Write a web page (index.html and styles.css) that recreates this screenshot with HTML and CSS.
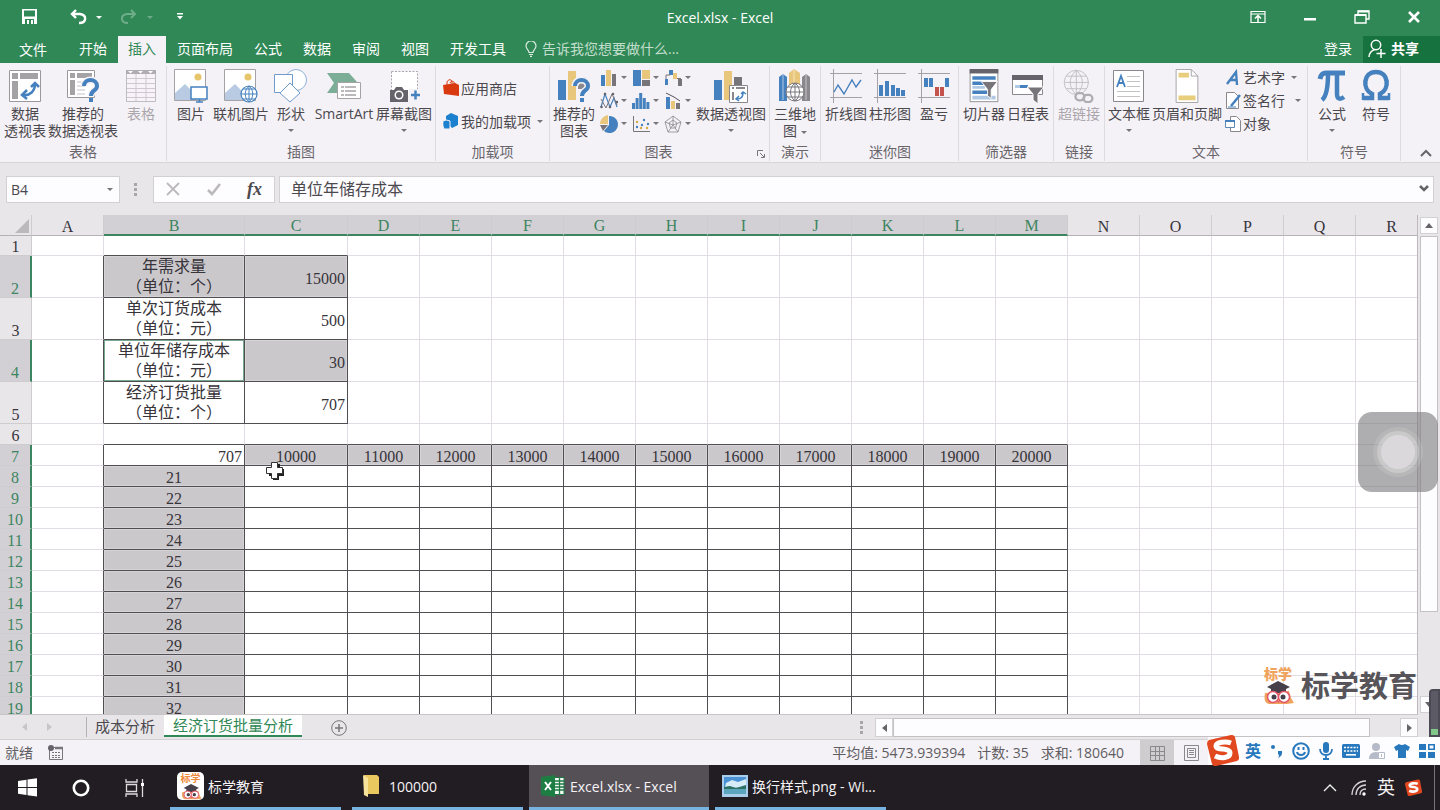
FILE: index.html
```html
<!DOCTYPE html>
<html lang="zh-CN">
<head>
<meta charset="utf-8">
<title>Excel.xlsx - Excel</title>
<link rel="stylesheet" href="styles.css">
</head>
<body>
<svg class="defs" width="0" height="0" aria-hidden="true">
  <defs>
    <symbol id="sogou" viewBox="0 0 32 32">
      <path fill="#e2481f" d="M2 6 24 1q3-.5 4 2l4 20q.5 3-2 4L9 32q-3 .5-4-2L0 10q0-3 2-4z"/>
      <path fill="none" stroke="#fff" stroke-width="5" d="M24 9c-5-2-15-1-15 3 0 5 14 1 14 7 0 5-9 6-15 3"/>
    </symbol>
    <symbol id="mascot" viewBox="0 0 32 24">
      <path fill="#f0a35c" d="M3 12q-2 10 4 11h18l7-1-3-5-2-7z"/>
      <path fill="#45404a" d="M5 6 16 0l12 6-4 2v4H9V8z"/>
      <circle cx="11" cy="16" r="5.500" fill="#fff" stroke="#e2586a" stroke-width="1.500"/>
      <circle cx="22" cy="16" r="5.500" fill="#fff" stroke="#e2586a" stroke-width="1.500"/>
      <circle cx="12" cy="16" r="2.500" fill="#45404a"/><circle cx="21" cy="16" r="2.500" fill="#45404a"/>
      <path fill="#e2586a" d="m15 20 1.500 2 1.500-2z"/>
    </symbol>
  </defs>
</svg>
<div class="app">
  <header class="titlebar">
    <div class="quick">
      <button class="qbtn save" aria-label="保存"><svg width="16" height="16" viewBox="0 0 16 16"><path fill="#fff" fill-rule="evenodd" d="M0 0h15v15H0zM2 1.500v6h11v-6zM3 10v5h9v-5z"/><path fill="#fff" d="M5 11h2v4H5zM9 11h2v4H9z"/></svg></button>
      <button class="qbtn undo" aria-label="撤消"><svg width="17" height="16" viewBox="0 0 17 16"><path fill="none" stroke="#fff" stroke-width="2.400" d="M2 5h8c7 1 7 9-1 9M6 1 2 5l4 4"/></svg></button><i class="caret white"></i>
      <button class="qbtn redo" aria-label="恢复"><svg width="17" height="16" viewBox="0 0 17 16"><path fill="none" stroke="#fff" stroke-width="2" d="M15 5H7c-7 1-7 9 1 9M11 1l4 4-4 4"/></svg></button><i class="caret white dim"></i>
      <button class="qbtn more" aria-label="自定义快速访问工具栏"><svg width="8" height="8" viewBox="0 0 8 8"><path fill="#fff" d="M1 0h6v1.500H1zM1 3h6L4 6.500z"/></svg></button>
    </div>
    <h1 class="title">Excel.xlsx - Excel</h1>
    <div class="wincontrols">
      <button aria-label="功能区显示选项"><svg width="16" height="14" viewBox="0 0 16 14"><path fill="none" stroke="#fff" stroke-width="1.200" d="M1 1.500h14v11H1zM1 4h14"/><path fill="none" stroke="#fff" stroke-width="1.500" d="M8 12V6M5 8.500l3-3 3 3"/></svg></button>
      <button aria-label="最小化"><svg width="14" height="14" viewBox="0 0 14 14"><path fill="#fff" d="M1 8h12v2.500H1z"/></svg></button>
      <button aria-label="还原"><svg width="16" height="14" viewBox="0 0 16 14"><path fill="none" stroke="#fff" stroke-width="1.400" d="M4 4V1h11v8h-3M1 5h11v8H1z"/><path stroke="#fff" stroke-width="2" d="M1 5h11M4 1.500h11"/></svg></button>
      <button aria-label="关闭"><svg width="12" height="12" viewBox="0 0 12 12"><path stroke="#fff" stroke-width="2.600" d="m1 1 10 10M11 1 1 11"/></svg></button>
    </div>
  </header>

  <nav class="tabs">
    <button class="tab file">文件</button>
    <button class="tab">开始</button>
    <button class="tab current">插入</button>
    <button class="tab">页面布局</button>
    <button class="tab">公式</button>
    <button class="tab">数据</button>
    <button class="tab">审阅</button>
    <button class="tab">视图</button>
    <button class="tab">开发工具</button>
    <button class="tell"><svg width="12" height="16" viewBox="0 0 12 16"><path fill="none" stroke="#d8ecdf" stroke-width="1.200" d="M4 11.500C4 9 1 8 1 5a5 5 0 0 1 10 0c0 3-3 4-3 6.500zM4 13.500h4M5 15.400h2"/></svg>告诉我您想要做什么...</button>
    <span class="grow"></span>
    <button class="login">登录</button>
    <button class="share"><svg width="18" height="20" viewBox="0 0 18 20"><circle cx="8" cy="6" r="4.700" fill="none" stroke="#fff" stroke-width="1.500"/><path fill="none" stroke="#fff" stroke-width="1.500" d="M1 18c0-4 3-7 6-7.500M13 10v9M8.500 14.500h9"/></svg>共享</button>
  </nav>

  <section class="ribbon">
    <div class="group">
      <div class="tools">
        <button class="big w48"><svg width="32" height="32" viewBox="0 0 32 32"><path fill="#fff" stroke="#9b989c" d="M.5.500h31v31H.5z"/><path fill="#a5a2a6" d="M3 3h6v6H3zM11 3h18v6H11zM3 11h6v18H3z"/><path fill="none" stroke="#4581be" stroke-width="2.500" d="M14 25c7 1 12-4 12-11M18 20l-5 5 5 4M22 17l4-4 4 4"/></svg><span>数据<br>透视表</span></button>
        <button class="big w68"><svg width="32" height="34" viewBox="0 0 32 34"><path fill="#fff" stroke="#9b989c" d="M.5 1.500h27v27H.5z"/><path fill="#a5a2a6" d="M3 4h5v5H3zM10 4h15v5H10zM3 11h5v15H3z"/><path stroke="#c4c1c5" d="M10 13h8M10 17h8M10 21h8M10 25h8"/><path fill="none" stroke="#f5f2f7" stroke-width="7" d="M17 17c0-8 13-8 13 0 0 5-6 4-6 10"/><path fill="none" stroke="#4581be" stroke-width="4" d="M17 17c0-8 13-8 13 0 0 5-6 4-6 10"/><path fill="#4581be" d="M22 29h4v4h-4z"/></svg><span>推荐的<br>数据透视表</span></button>
        <button class="big w48 off"><svg width="32" height="32" viewBox="0 0 32 32"><path fill="#f7f3f8" stroke="#c0bbc1" d="M1.500.500h29v31h-29z"/><path fill="#b0acb1" d="M1 0h30v4H1z"/><path fill="#fff" d="M3 1h5L5.500 3.500zM13 1h5l-2.500 2.500zM23 1h5l-2.500 2.500z"/><path stroke="#cfc8d0" d="M11 4v27M21 4v27M2 8.500h28M2 13.500h28M2 18.500h28M2 22.500h28M2 27.500h28"/></svg><span>表格</span></button>
      </div>
      <p class="glabel">表格</p>
    </div>
    <div class="group">
      <div class="tools">
        <button class="big w46"><svg width="34" height="34" viewBox="0 0 34 34"><path fill="#fff" stroke="#a5a2a6" d="M.5.500h31v31H.5z"/><path fill="#b9cbe3" d="M1 24 11 15l12 12v4H1z"/><circle cx="24" cy="8" r="3.500" fill="#e7c56d"/><path fill="#fff" stroke="#4581be" stroke-width="1.500" d="M17 18h16v12H17z"/><path stroke="#4581be" stroke-width="1.500" d="M22 33h7M25.500 30v3"/></svg><span>图片</span></button>
        <button class="big w54"><svg width="34" height="34" viewBox="0 0 34 34"><path fill="#fff" stroke="#a5a2a6" d="M.5.500h31v31H.5z"/><path fill="#b9cbe3" d="M1 24 11 15l12 12v4H1z"/><circle cx="24" cy="8" r="3.500" fill="#e7c56d"/><circle cx="25" cy="25" r="8" fill="#fff" stroke="#4581be" stroke-width="1.200"/><path fill="none" stroke="#4581be" d="M25 17c-5 4-5 12 0 16 5-4 5-12 0-16zM17 25h16M25 17v16M19 20h12M19 30h12"/></svg><span>联机图片</span></button>
        <button class="big w46"><svg width="34" height="34" viewBox="0 0 34 34"><circle cx="22" cy="11" r="10.500" fill="#fff" stroke="#8fb0d6"/><path fill="#fff" stroke="#6f9bcb" d="M.5 5.500h18v18H.5z"/><path fill="#fff" stroke="#6f9bcb" d="m16 14 10 10-10 9L6 24z"/></svg><span>形状</span><i class="caret"></i></button>
        <button class="big w60"><svg width="34" height="32" viewBox="0 0 34 32"><path fill="#7cae97" d="M0 3h22l8 9H18l-7 11H0l7-10z"/><path fill="#fff" stroke="#a5a2a6" d="M10.500 12.500h23v16h-23z"/><path stroke="#a5a2a6" stroke-width="1.500" d="M14 17h3M18 17h11M14 21h3M18 21h11M14 25h3M18 25h11"/></svg><span>SmartArt</span></button>
        <button class="big w60"><svg width="32" height="34" viewBox="0 0 32 34"><path fill="#fff" stroke="#aaa7ab" stroke-dasharray="2 1.500" d="M3.500 2.500h26v24h-26z"/><path fill="#66646a" d="M2 21h4l2-3h6l2 3h4v12H2z"/><circle cx="11" cy="26" r="4.500" fill="#fff"/><circle cx="11" cy="26" r="3" fill="#66646a"/><path fill="#f5f2f7" d="M21 20h11v14H21z"/><path stroke="#4581be" stroke-width="2.500" d="M23 26h9M27.500 21.500v9"/></svg><span>屏幕截图</span><i class="caret"></i></button>
      </div>
      <p class="glabel">插图</p>
    </div>
    <div class="group addins">
      <div class="tools stack2">
        <button class="row"><svg width="16" height="18" viewBox="0 0 16 18"><path fill="#d9390f" d="m0 6 12-2 4 2v11L1 15z"/><path fill="none" stroke="#d9390f" d="M4 8V3c1-3 5-3 5 0v3M7 4c1-3 4-2 5 1"/></svg>应用商店</button>
        <button class="row"><svg width="16" height="18" viewBox="0 0 16 18"><path fill="#1b80cd" d="m8 1 7 3v9l-6 3-6-6V4z"/><path fill="#1b80cd" stroke="#f5f2f7" d="M0 9q3-2 7 0v8H1q-2-4-1-8z"/></svg>我的加载项<i class="caret gap4"></i></button>
      </div>
      <p class="glabel">加载项</p>
    </div>
    <div class="group charts">
      <div class="tools">
        <button class="big w46"><svg width="34" height="34" viewBox="0 0 34 34"><path fill="#4581be" d="M1 11h8v20H1z"/><path fill="#e8c77d" d="M11 2h8v29h-8z"/><path fill="#8a888c" d="M21 8h8v23h-8z"/><path fill="none" stroke="#f5f2f7" stroke-width="7" d="M18 17c0-8 13-8 13 0 0 5-6 4-6 10"/><path fill="#f5f2f7" d="M19 20h12v14H19z"/><path fill="none" stroke="#4581be" stroke-width="4" d="M18 17c0-8 13-8 13 0 0 5-6 4-6 10"/><path fill="#4581be" d="M23 29h4v4h-4z"/></svg><span>推荐的<br>图表</span></button>
        <div class="minis">
          <button aria-label="柱形图"><svg width="18" height="18" viewBox="0 0 18 18"><path fill="#4581be" d="M1 6h4v11H1z"/><path fill="#e8c77d" d="M6 1h5v16H6z"/><path fill="#77757a" d="M12 5h4v12h-4z"/></svg><i class="caret"></i></button>
          <button aria-label="层次结构图"><svg width="18" height="18" viewBox="0 0 18 18"><path fill="#4581be" d="M1 1h8v16H1z"/><path fill="#e8c77d" d="M10 1h8v9h-8z"/><path fill="#77757a" d="M10 11h8v6h-8z"/></svg><i class="caret"></i></button>
          <button aria-label="瀑布图"><svg width="18" height="18" viewBox="0 0 18 18"><path fill="#4581be" d="M1 10h3v6H1zM5 1h4v5H5z"/><path fill="#e8c77d" d="M9 4h4v6H9z"/><path fill="none" stroke="#77757a" d="M2 10V6h4M13 9.500h4"/><path fill="#77757a" d="M14 10h4v7h-4z"/></svg><i class="caret"></i></button>
          <button aria-label="折线图"><svg width="18" height="18" viewBox="0 0 18 18"><path fill="none" stroke="#4581be" stroke-width="1.200" d="m1 15 4-13 5 13 4-9 3 9"/><path fill="none" stroke="#77757a" d="m1 7 5 9 6-14 5 11"/><g fill="#66646a"><circle cx="5" cy="2" r="1.300"/><circle cx="13" cy="2" r="1.300"/><circle cx="1.500" cy="15" r="1.300"/><circle cx="10" cy="15" r="1.300"/><circle cx="17" cy="10" r="1.300"/></g></svg><i class="caret"></i></button>
          <button aria-label="统计图"><svg width="18" height="18" viewBox="0 0 18 18"><path fill="#4581be" d="M0 11h3v6H0zM3.600 6h3v11h-3zM7.200 1h3v16h-3zM10.800 6h3v11h-3zM14.400 10h3v7h-3z"/></svg><i class="caret"></i></button>
          <button aria-label="组合图"><svg width="18" height="18" viewBox="0 0 18 18"><path fill="#4581be" d="M2 5h4v12H2z"/><path fill="#e8c77d" d="M7 9h4v8H7z"/><path fill="#77757a" d="M12 11h4v6h-4z"/><path fill="none" stroke="#55535a" d="m2 1 8 4 6 4"/></svg><i class="caret"></i></button>
          <button aria-label="饼图"><svg width="18" height="18" viewBox="0 0 18 18"><path fill="#e8c77d" d="M8 9V0a9 9 0 0 0-8 9z"/><path fill="#4581be" d="M9 1a8.500 8.500 0 1 1-5 15l5-6z"/><path fill="#77757a" d="M0 10h8l-5 6z"/></svg><i class="caret"></i></button>
          <button aria-label="散点图"><svg width="18" height="18" viewBox="0 0 18 18"><path fill="none" stroke="#77757a" d="M1.500 1v15.500H18"/><g fill="#4581be"><circle cx="12" cy="5" r="1.200"/><circle cx="5" cy="12" r="1.200"/><circle cx="16" cy="9" r="1.200"/><circle cx="10" cy="10" r="1.200"/></g><g fill="#d8ac45"><circle cx="5" cy="7" r="1.200"/><circle cx="9" cy="13" r="1.200"/><circle cx="15" cy="13" r="1.200"/></g></svg><i class="caret"></i></button>
          <button aria-label="雷达图"><svg width="18" height="18" viewBox="0 0 18 18"><path fill="none" stroke="#8a888c" stroke-width=".8" d="m9 1 8 6-3 10H4L1 7zM9 5l4 3-1.500 5h-5L5 8zM9 1v9M17 7 9 10 1 7M4 17l5-7 5 7"/></svg><i class="caret"></i></button>
        </div>
        <button class="big w70"><svg width="36" height="34" viewBox="0 0 36 34"><path fill="#4581be" d="M1 11h8v20H1z"/><path fill="#e8c77d" d="M11 2h8v29h-8z"/><path fill="#77757a" d="M21 8h8v12h-8z"/><path fill="#fff" stroke="#8a888c" d="M16.500 16.500h18v17h-18z"/><path stroke="#8a888c" stroke-width="2" d="M19 19h2M23 19h9M20 23v8"/><path fill="none" stroke="#4581be" stroke-width="1.500" d="M24 30c4 0 6-2 6-6M26 27l-3 3 3 2M28 25l2-2 3 2"/></svg><span>数据透视图</span><i class="caret"></i></button>
      </div>
      <p class="glabel">图表</p>
      <button class="launcher" aria-label="图表选项"><svg width="8" height="8" viewBox="0 0 8 8"><path fill="none" stroke="#77757a" d="M.5 6V.500H6M3 3l4 4M7.500 4v3.500H4"/></svg></button>
    </div>
    <div class="group">
      <div class="tools">
        <button class="big w48"><svg width="34" height="34" viewBox="0 0 34 34"><path fill="#4581be" d="m1 8 4-3 4 3v24H1z"/><path fill="#e8c77d" d="m11 4 5-4 6 4v24H11z"/><path fill="#8a888c" d="m24 8 4-3 4 3v24h-8z"/><path stroke="#b0cae6" d="M5 5v26"/><path stroke="#f6e6bd" d="M16 1v20"/><path stroke="#c8c6ca" d="M28 5v26"/><circle cx="17" cy="23" r="9" fill="#fff" stroke="#77757a"/><path fill="none" stroke="#77757a" d="M17 14c-6 5-6 13 0 18 6-5 6-13 0-18zM8 23h18M17 14v18M10 18h14M10 28h14"/></svg><span>三维地<br>图<i class="caret inline"></i></span></button>
      </div>
      <p class="glabel">演示</p>
    </div>
    <div class="group sparks">
      <div class="tools">
        <button class="big w44"><svg width="34" height="34" viewBox="0 0 34 34"><path stroke="#a5a2a6" d="M4.500 0v34M1 4.500h32M1 28.500h32"/><path fill="none" stroke="#4581be" stroke-width="1.400" d="m5 23 4-7 6 9 8-14 4 7 5-7"/></svg><span>折线图</span></button>
        <button class="big w44"><svg width="34" height="34" viewBox="0 0 34 34"><path stroke="#a5a2a6" d="M4.500 0v34M1 4.500h32M1 28.500h32"/><path fill="#4581be" d="M6 16h4v11H6zM12 12h4v15h-4zM18 16h4v11h-4zM23 19h4v8h-4zM28 21h4v6h-4z"/></svg><span>柱形图</span></button>
        <button class="big w44"><svg width="34" height="34" viewBox="0 0 34 34"><path stroke="#a5a2a6" d="M4.500 0v34M1 4.500h32M1 28.500h32"/><path fill="#4581be" d="M7 9h4v9H7zM12 9h4v9h-4zM28 9h4v9h-4z"/><path fill="#c4524d" d="M18 18h4v9h-4zM23 18h4v9h-4z"/></svg><span>盈亏</span></button>
      </div>
      <p class="glabel">迷你图</p>
    </div>
    <div class="group filters">
      <div class="tools">
        <button class="big w44"><svg width="34" height="36" viewBox="0 0 34 38"><path fill="#fff" stroke="#8a888c" d="M1.500.500h31v36h-31z"/><path fill="#66646a" d="M1 0h32v5H1z"/><path fill="#4581be" d="M4 8h26v4H4zM4 14h18v4H4zM4 24h20v4H4z"/><path fill="#b0cae6" d="M4 19h14v3H4zM4 30h26v4H4z"/><path fill="#77757a" stroke="#fff" d="M14 14h18l-7 9v10l-4-3v-7z"/></svg><span>切片器</span></button>
        <button class="big w44"><svg width="34" height="34" viewBox="0 0 34 34"><path fill="#fff" stroke="#8a888c" d="M1.500 7.500h30v18h-30z"/><path fill="#66646a" d="M1 6h31v5H1z"/><path fill="#b0cae6" d="M4 16h7v3H4z"/><path fill="#4581be" d="M9 16h8v3H9z"/><path fill="#77757a" stroke="#fff" d="M16 18h17l-6 7v10l-5-4v-6z"/></svg><span>日程表</span></button>
      </div>
      <p class="glabel">筛选器</p>
    </div>
    <div class="group">
      <div class="tools">
        <button class="big w48 off"><svg width="34" height="38" viewBox="0 0 34 38"><circle cx="14" cy="15" r="13.500" fill="none" stroke="#bebac0"/><path fill="none" stroke="#bebac0" d="M14 1.500c-9 8-9 19 0 27 9-8 9-19 0-27zM1 15h27M14 2v26M3 8h22M3 22h22"/><path fill="none" stroke="#f5f2f7" stroke-width="6" d="M13 31h19"/><rect x="13" y="27" width="10" height="8" rx="4" fill="none" stroke="#b0acb1" stroke-width="2.500"/><rect x="22" y="29" width="10" height="8" rx="4" fill="none" stroke="#b0acb1" stroke-width="2.500"/></svg><span>超链接</span></button>
      </div>
      <p class="glabel">链接</p>
    </div>
    <div class="group textgroup">
      <div class="tools">
        <button class="big w46"><svg width="34" height="34" viewBox="0 0 34 34"><path fill="#fff" stroke="#8a888c" d="M1.500 1.500h30v31h-30z"/><path stroke="#c4c1c5" d="M15 7.500h13M15 12.500h13M15 17.500h13M5 22.500h23M5 27.500h23"/><path fill="none" stroke="#4581be" stroke-width="1.800" d="m5 18 4-11 4 11M6.500 14h5"/></svg><span>文本框</span><i class="caret"></i></button>
        <button class="big w70"><svg width="26" height="36" viewBox="0 0 26 36"><path fill="#fff" stroke="#a5a2a6" d="M1.500.500h16l7 7v28h-23z"/><path fill="none" stroke="#a5a2a6" d="M17.500.500v7h7"/><path fill="#e8cd7d" d="M4 4h11v5H4zM4 28h18v5H4z"/></svg><span>页眉和页脚</span></button>
        <div class="stack3">
          <button class="row"><svg width="16" height="18" viewBox="0 0 16 18"><path fill="none" stroke="#4581be" stroke-width="2.400" d="M2 15 11 3l1 13M5 11h7"/></svg>艺术字<i class="caret gap4"></i></button>
          <button class="row"><svg width="16" height="18" viewBox="0 0 16 18"><path fill="#fff" stroke="#8a888c" d="M1.500.500h8l4 4v12h-12z"/><path stroke="#4581be" stroke-width="2.500" d="m15 3-9 11"/><path stroke="#4581be" d="M3 15h8"/></svg>签名行<i class="caret gap8"></i></button>
          <button class="row"><svg width="16" height="18" viewBox="0 0 16 18"><path fill="#fff" stroke="#8a888c" d="M5.500 1.500h6l4 4v11h-10z"/><path fill="#fff" stroke="#6289b4" d="M.5 5.500h9v7h-9z"/><path stroke="#4581be" stroke-width="2" d="M0 6h10"/></svg>对象</button>
        </div>
      </div>
      <p class="glabel">文本</p>
    </div>
    <div class="group symbols">
      <div class="tools">
        <button class="big w44"><svg width="30" height="34" viewBox="0 0 30 34"><path fill="none" stroke="#4581be" stroke-width="5" d="M3 10c1-5 3-6 6-6h19"/><path fill="none" stroke="#4581be" stroke-width="4.500" d="M11 5c0 12-1 22-6 26M20 5v20c0 5 3 6 7 3"/></svg><span>公式</span><i class="caret"></i></button>
        <button class="big w44"><svg width="30" height="34" viewBox="0 0 30 34"><path fill="none" stroke="#4581be" stroke-width="4.500" d="M2 29h9v-4C1 20 2 3 15 3s14 17 4 22v4h9"/><path stroke="#4581be" stroke-width="2.500" d="M2 24v7M28 24v7"/></svg><span>符号</span></button>
      </div>
      <p class="glabel">符号</p>
    </div>
    <button class="collapse" aria-label="折叠功能区"><svg width="12" height="8" viewBox="0 0 12 8"><path fill="none" stroke="#66646a" stroke-width="2" d="m1 7 5-5 5 5"/></svg></button>
  </section>

  <section class="formulabar">
    <div class="namebox"><input type="text" value="B4" aria-label="名称框"><button aria-label="名称列表"><i class="caret"></i></button></div>
    <span class="dots"></span>
    <div class="fxbox">
      <button aria-label="取消"><svg width="14" height="14" viewBox="0 0 14 14"><path stroke="#bcb9bd" stroke-width="1.800" d="m1 1 12 12M13 1 1 13"/></svg></button>
      <button aria-label="输入"><svg width="14" height="14" viewBox="0 0 14 14"><path fill="none" stroke="#bcb9bd" stroke-width="2.600" d="m1 8 4 4 8-10"/></svg></button>
      <button class="fx" aria-label="插入函数">fx</button>
    </div>
    <div class="formula"><input type="text" value="单位年储存成本" aria-label="编辑栏"><button aria-label="展开编辑栏"><svg width="10" height="8" viewBox="0 0 10 8"><path fill="none" stroke="#66646a" stroke-width="2.600" d="m1 1 4 4 4-4"/></svg></button></div>
  </section>

  <main class="sheetarea">
    <div class="gridwrap">
      <table class="grid" id="grid"></table>
      <svg class="pointer" width="18" height="18" viewBox="0 0 18 18"><path fill="#222" d="M7 2h7v5h4v7h-5v4H7v-4H3V7h4z"/><path fill="#fff" stroke="#333" d="M5.500.500h6v5h5v6h-5v5h-6v-5h-5v-6h5z"/></svg>
      <div class="brand">
        <div class="brandlogo"><b>标学</b><svg width="32" height="24"><use href="#mascot"/></svg></div>
        <span>标学教育</span>
      </div>
    </div>
    <div class="vscroll">
      <button aria-label="向上滚动"><i class="tri up"></i></button>
      <div class="vtrack"><div class="vthumb"></div></div>
      <button aria-label="向下滚动"><i class="tri down"></i></button>
    </div>
    <div class="meter"></div>
    <button class="assist" aria-label="辅助触控"><i></i></button>
  </main>

  <div class="sheettabs">
    <div class="sheetnav"><i class="tri left faint"></i><i class="tri right faint"></i></div>
    <button class="stab">成本分析</button>
    <button class="stab active">经济订货批量分析</button>
    <button class="addsheet" aria-label="新工作表"><svg width="16" height="16" viewBox="0 0 16 16"><circle cx="8" cy="8" r="7.300" fill="none" stroke="#77757a"/><path stroke="#77757a" stroke-width="1.500" d="M8 4v8M4 8h8"/></svg></button>
    <span class="grow"></span>
    <span class="dots"></span>
    <div class="hscroll">
      <button aria-label="向左滚动"><i class="tri left"></i></button>
      <div class="htrack"><div class="hthumb"></div></div>
      <button aria-label="向右滚动"><i class="tri right"></i></button>
    </div>
  </div>

  <footer class="status">
    <span>就绪</span>
    <svg class="macro" width="16" height="15" viewBox="0 0 16 15"><path fill="none" stroke="#77757a" d="M1.500 5v9.500h13V2.500H6"/><path stroke="#77757a" stroke-width="2.500" d="M7 3h8"/><path stroke="#77757a" stroke-dasharray="2 1" d="M4 7.500h9M4 10.500h9M4 12.500h9"/><circle cx="3" cy="3" r="3" fill="#66646a"/></svg>
    <span class="grow"></span>
    <span class="stat">平均值: 5473.939394</span>
    <span class="stat">计数: 35</span>
    <span class="stat">求和: 180640</span>
    <button class="view on" aria-label="普通"><svg width="16" height="16" viewBox="0 0 16 16"><path fill="none" stroke="#8a888c" d="M1.500 1.500h14v14h-14zM6.500 1v14M10.500 1v14M1 6.500h14M1 10.500h14"/></svg></button>
    <button class="view" aria-label="页面布局"><svg width="16" height="16" viewBox="0 0 16 16"><path fill="none" stroke="#8a888c" d="M1.500.500h14v15h-14zM4.500 3.500h8v9h-8zM6 5.500h5M6 7.500h5M6 9.500h5"/></svg></button>
    <div class="ime">
      <svg class="imelogo" width="32" height="32"><use href="#sogou"/></svg>
      <b>英</b>
      <svg width="14" height="16" viewBox="0 0 14 16"><circle cx="3" cy="4" r="2" fill="#2878bd"/><path fill="#2878bd" d="M8 8h4q1 5-4 7 2-3 0-4z"/></svg>
      <svg width="18" height="18" viewBox="0 0 18 18"><circle cx="9" cy="9" r="7.800" fill="none" stroke="#2878bd" stroke-width="2"/><path fill="none" stroke="#2878bd" stroke-width="2" d="M6.500 5v3M11.500 5v3M5 10c1 4 7 4 8 0"/></svg>
      <svg width="14" height="18" viewBox="0 0 14 18"><rect x="4" y="0" width="6" height="11" rx="3" fill="#2878bd"/><path fill="none" stroke="#2878bd" stroke-width="1.800" d="M1 7c0 8 12 8 12 0M7 13v4M4 17h6"/></svg>
      <svg width="18" height="16" viewBox="0 0 18 16"><rect y="1" width="18" height="14" rx="1.500" fill="#2878bd"/><path stroke="#fff" stroke-width="1.600" stroke-dasharray="2 1.200" d="M2 4.500h14M2 8h14"/><path stroke="#fff" stroke-width="1.600" d="M4 11.800h10"/></svg>
      <svg width="17" height="17" viewBox="0 0 17 17"><circle cx="7" cy="4" r="4" fill="#b5bbc8"/><path fill="#b5bbc8" d="M0 16q0-7 7-7t7 7z"/><path fill="#fff" stroke="#b5bbc8" d="M9.500 9.500h6v6h-6z"/><path stroke="#b5bbc8" d="M12.500 11v3"/></svg>
      <svg width="16" height="16" viewBox="0 0 16 16"><path fill="#2878bd" d="M5 1q3 2 6 0l5 3-2 4-2-1v8H4V7L2 8 0 4z"/></svg>
      <svg width="16" height="16" viewBox="0 0 16 16"><path fill="#2878bd" d="M0 1h7v6H0zM0 9h7v6H0zM9 9h7v6H9z"/><path fill="none" stroke="#2878bd" stroke-width="1.600" d="M9.800 1.800h5.400v4.400H9.800z"/></svg>
    </div>
  </footer>

  <div class="taskbar">
    <button class="start" aria-label="开始"><svg width="20" height="19" viewBox="0 0 20 19"><path fill="#fff" d="m0 3 8.500-1.200v7.200H0zM9.500 1.600 19 .2V9H9.500zM0 10h8.500v7L0 15.800zM9.500 10H19v8.600l-9.500-1.400z"/></svg></button>
    <button class="cortana" aria-label="搜索"><svg width="18" height="18" viewBox="0 0 18 18"><circle cx="9" cy="9" r="7.200" fill="none" stroke="#fff" stroke-width="2.600"/></svg></button>
    <button class="taskview" aria-label="任务视图"><svg width="20" height="18" viewBox="0 0 20 18"><path fill="none" stroke="#dcdadd" stroke-width="1.300" d="M1 0v3h11V0M1 18v-3h11v3M1.500 5.500h10v7h-10zM17.500 0v18"/><path fill="#fff" d="M16 4h3v3h-3z"/></svg></button>
    <button class="task"><span class="appicon"><b>标学</b><svg width="22" height="16" viewBox="0 0 32 24"><use href="#mascot"/></svg></span>标学教育</button>
    <button class="task folder"><svg width="16" height="22" viewBox="0 0 16 22"><path fill="#e9c85f" d="M1 0h13l2 2v17H4z"/><path fill="#f8e39b" d="m0 0 5 3v19l-4-2z"/></svg>100000</button>
    <button class="task now"><svg width="24" height="22" viewBox="0 0 24 22"><path fill="#f3f8f4" stroke="#1f7a44" d="M12 2.500h11v17H12z"/><path stroke="#1f7a44" stroke-width="1.300" d="M14 6h9M14 9h9M14 12h9M14 15h9M18.500 3v16"/><path fill="#1c7e42" d="m0 2 14-2v22L0 20z"/><path stroke="#fff" stroke-width="2" d="m4 7 6 8M10 7l-6 8"/></svg>Excel.xlsx - Excel</button>
    <button class="task"><svg width="26" height="22" viewBox="0 0 26 22"><path fill="#a9cdea" d="M0 0h26v22H0z"/><path fill="#4b92d4" d="M2 2h22v10H2z"/><path fill="#d5ebf8" d="m4 8 6-3 6 2 8-3v8H3z"/><path fill="#2c6f63" d="m2 12 6-1 6 2 10-3v4H2z"/><path fill="#5ba5bd" d="M2 14h22v5H2z"/></svg>换行样式.png - Wi...</button>
    <span class="grow"></span>
    <div class="tray">
      <svg width="14" height="8" viewBox="0 0 14 8"><path fill="none" stroke="#eee" stroke-width="1.400" d="m1 7 6-6 6 6"/></svg>
      <svg width="16" height="16" viewBox="0 0 16 16"><path fill="none" stroke="#d5d3d6" stroke-width="1.300" d="M1 15C1 7 7 1 15 1M5 15C5 9 9 5 15 5M9 15q0-6 6-6"/><circle cx="13" cy="14" r="1.700" fill="#fff"/></svg>
      <span>英</span>
      <svg width="17" height="17"><use href="#sogou"/></svg>
    </div>
  </div>
</div>
<script src="grid.js"></script>
</body>
</html>
```
FILE: styles.css
```css
* { box-sizing: border-box; }
body { margin: 0; font: 14px/17px "Open Sans", "Noto Sans CJK SC", sans-serif; color: #4c494e; }
button, input { font: inherit; color: inherit; border: 0; background: none; padding: 0; margin: 0; }
button { white-space: nowrap; }
svg { display: block; flex: none; }
p, h1 { margin: 0; }
.defs { position: absolute; }
.app { height: 100vh; display: flex; flex-direction: column; overflow: hidden; background: #e9e6ea; }
.grow { flex: 1; }

.caret { display: block; width: 0; height: 0; border: 3px solid transparent; border-top-color: #77757a; border-bottom: 0; }
.caret.white { border-top-color: #fff; }
.caret.dim { opacity: .3; }
.caret.inline { display: inline-block; margin-left: 4px; vertical-align: middle; }
.caret.gap4 { margin-left: 4px; }
.caret.gap8 { margin-left: 8px; }
.tri { display: block; width: 0; height: 0; border: 4px solid transparent; }
.tri.up { border-bottom: 5px solid #66646a; border-top: 0; }
.tri.down { border-top: 5px solid #66646a; border-bottom: 0; }
.tri.left { border-right: 5px solid #66646a; border-left: 0; }
.tri.right { border-left: 5px solid #66646a; border-right: 0; }
.tri.faint { opacity: .25; }
.dots { width: 3px; height: 13px; background: repeating-linear-gradient(#a9a6aa 0 3px, transparent 3px 5px); }

.titlebar { height: 36px; flex: none; display: grid; grid-template-columns: 1fr auto 1fr; align-items: center; padding-bottom: 2px; background: #308856; color: #fff; }
.quick { display: flex; align-items: center; padding-left: 22px; }
.undo { margin-left: 32px; margin-right: 9px; }
.redo { margin-left: 18px; margin-right: 10px; opacity: .3; }
.more { margin-left: 23px; }
.title { font-size: 14px; font-weight: 400; }
.wincontrols { display: flex; justify-content: flex-end; }
.wincontrols button { width: 52px; display: flex; justify-content: center; align-items: center; }

.tabs { height: 27px; flex: none; display: flex; gap: 1px; background: #308856; color: #fff; }
.tabs > button { padding-bottom: 2px; }
.tab { padding: 0 10px; }
.tab.file { padding: 0 20px 0 19px; margin-right: 1px; }
.tab.current { background: #f5f2f7; color: #308856; }
.tell { display: flex; align-items: center; gap: 5px; padding-left: 8px; color: #c2dfcd; }
.login { padding: 0 10px; }
.share { width: 77px; padding-left: 5px; display: flex; align-items: center; gap: 5px; background: #16733f; font-weight: 700; }

.ribbon { height: 100px; flex: none; display: flex; background: #f5f2f7; border-bottom: 1px solid #d8d5d9; }
.group { position: relative; display: flex; flex-direction: column; margin: 3px 0 1px; padding: 0 1px; border-right: 1px solid #dedbdf; }
.tools { flex: 1; display: flex; }
.glabel { text-align: center; line-height: 18px; color: #69666b; }
.big { display: flex; flex-direction: column; align-items: center; height: 76px; }
.big svg { height: 34px; margin-top: 3px; margin-bottom: 2px; }
.big .caret { margin-top: 7px; }
.big .caret.inline { margin-top: 0; }
.off { color: #aaa6ab; }
.w44 { width: 44px; } .w46 { width: 46px; } .w48 { width: 48px; } .w54 { width: 54px; }
.w60 { width: 60px; } .w68 { width: 68px; } .w70 { width: 70px; }
.row { display: flex; align-items: center; gap: 2px; }
.stack2 { flex-direction: column; justify-content: center; gap: 15px; padding: 0 5px 0 6px; }
.minis { display: grid; grid-template-columns: repeat(3, 32px); grid-template-rows: repeat(3, 23px); padding-left: 3px; }
.minis button { display: flex; align-items: center; gap: 3px; }
.charts { padding-right: 3px; }
.launcher { position: absolute; right: 4px; bottom: 3px; }
.sparks { padding: 0 2px 0 3px; }
.filters { padding: 0 3px; }
.stack3 { display: grid; grid-template-rows: repeat(3, 23px); padding: 0 5px 0 3px; }
.symbols { padding: 0 2px; }
.collapse { margin-left: auto; align-self: flex-end; padding: 0 8px 5px 0; }

.formulabar { height: 52px; flex: none; display: flex; align-items: center; padding: 0 6px; }
.formulabar > div { height: 27px; display: flex; align-items: center; background: #fdfcfe; border: 1px solid #d3d0d4; }
.namebox { width: 114px; padding: 0 6px 0 4px; }
.namebox input { flex: 1; min-width: 0; }
.formulabar .dots { margin: 0 16px 0 14px; }
.fxbox { width: 122px; justify-content: space-between; padding: 0 12px; }
.fx { font: italic 700 18px/20px "Liberation Serif", serif; }
.formulabar .formula { flex: 1; margin-left: 4px; padding: 0 4px 0 11px; }
.formula input { flex: 1; font-size: 16px; }

.sheetarea { flex: 1; min-height: 0; display: flex; position: relative; }
.gridwrap { flex: 1; min-width: 0; overflow: hidden; position: relative; border-right: 1px solid #bcb8bd; border-bottom: 1px solid #c8c5c9; background: #fff; }
.grid { border-collapse: separate; border-spacing: 0; table-layout: fixed; width: 1428px; font: 16px/16px "Liberation Serif", "Noto Sans CJK SC", serif; color: #37343a; }
.grid th, .grid td { padding: 4px 0 0; border: 0 solid #e2dde4; border-right-width: 1px; border-bottom-width: 1px; }
.grid th { font-weight: 400; background: #e9e6ea; border-color: #cfccd0; vertical-align: bottom; }
.grid thead th { height: 21px; line-height: 16px; border-bottom-color: #b5b2b6; }
.grid tbody tr:first-child > * { padding-top: 3px; }
.grid th.on { background: #d3d0d5; color: #3c8560; }
.grid thead th.on { border-bottom: 2px solid #3c8560; padding-top: 3px; }
.grid thead th:first-child { padding-top: 0; }
.grid tbody th.on { border-right: 2px solid #3c8560; }
.corner { width: 0; height: 0; margin: 0 2px 2px auto; border-left: 14px solid transparent; border-bottom: 14px solid #bcb9bd; }
.grid td.br { border-right-color: #514e53; }
.grid td.bb { border-bottom-color: #514e53; }
.grid td.sel { background: #cbc8cc; box-shadow: inset 0 0 0 1px #d7d4d8; }
.grid td.active { box-shadow: inset 0 0 0 1px #76a98d; }
.grid td.c { text-align: center; }
.grid td.label { text-align: center; line-height: 20px; padding-top: 1px; }
.grid td.r { text-align: right; padding-right: 2px; }
.pointer { position: absolute; left: 266px; top: 247px; }
.brand { position: absolute; right: 0; bottom: 9px; display: flex; align-items: center; gap: 7px; color: #58555a; font-size: 29px; line-height: 36px; font-weight: 700; }
.brandlogo { display: flex; flex-direction: column; align-items: center; }
.brandlogo b { font-size: 14px; line-height: 14px; color: #f0a35c; }

.vscroll { width: 22px; flex: none; display: flex; flex-direction: column; padding: 0 2px; }
.vscroll button { height: 17px; margin: 2px 0; display: flex; align-items: center; justify-content: center; background: #fdfcfe; border: 1px solid #d3d0d4; }
.vtrack { flex: 1; }
.vthumb { height: 82%; background: #fdfcfe; border: 1px solid #c4c1c5; }
.meter { position: absolute; right: 0; bottom: -22px; z-index: 1; width: 11px; height: 48px; border-radius: 4px 0 0 0; border: 2px solid #4b4a55; background: linear-gradient(#5b5a65 86%, #81c78a 86%); }
.assist { position: absolute; right: 2px; top: 197px; width: 80px; height: 80px; border-radius: 14px; background: rgba(125, 122, 126, .62); display: flex; align-items: center; justify-content: center; }
.assist i { width: 34px; height: 34px; border-radius: 50%; background: #dad8db; box-shadow: 0 0 0 4px rgba(255, 255, 255, .25), 0 0 0 8px rgba(255, 255, 255, .12); }

.sheettabs { height: 25px; flex: none; display: flex; align-items: flex-start; border-bottom: 1px solid #d3d0d4; font-size: 15px; }
.sheetnav { width: 87px; height: 20px; margin-top: 2px; padding-left: 22px; display: flex; align-items: center; gap: 20px; border-right: 1px solid #b5b2b6; }
.stab { height: 22px; padding: 0 9px 0 8px; line-height: 20px; }
.stab.active { padding: 0 9px; background: #fff; color: #308856; border-bottom: 2px solid #308856; }
.addsheet { margin: 5px 0 0 29px; }
.sheettabs .dots { margin: 6px 12px 0 0; }
.hscroll { width: 42.500%; max-width: 543px; margin: 3px 22px 0 0; display: flex; height: 19px; }
.hscroll button { width: 18px; display: flex; align-items: center; justify-content: center; background: #fdfcfe; border: 1px solid #d3d0d4; }
.htrack { flex: 1; }
.hthumb { width: 94%; height: 19px; background: #fdfcfe; border: 1px solid #c4c1c5; }

.status { height: 25px; flex: none; position: relative; display: flex; align-items: center; padding-left: 5px; padding-right: 232px; background: #f5f2f7; color: #605d62; }
.macro { margin-left: 15px; }
.stat { margin-right: 12px; }
.stat + .view { margin-left: 4px; }
.view { width: 34px; height: 25px; display: flex; align-items: center; justify-content: center; }
.view.on { background: #d0cdd1; }
.ime { position: absolute; right: 0; bottom: 0; width: 232px; height: 28px; padding: 0 5px 0 37px; display: flex; align-items: center; justify-content: space-between; background: #fdfcfe; color: #2878bd; font-size: 16px; }
.imelogo { position: absolute; left: -1px; bottom: -1px; }

.taskbar { height: 45px; flex: none; display: flex; align-items: center; background: #221d22; color: #f5f3f6; }
.start { margin-left: 18px; }
.cortana { margin-left: 34px; }
.taskview { margin: 0 25px 0 35px; }
.task { height: 45px; width: 171px; margin-right: 11px; padding: 0 7px; display: flex; align-items: center; gap: 4px; border-bottom: 3px solid #76b3e0; }
.task.folder { padding-left: 11px; gap: 10px; margin-right: 6px; }
.task.now { width: 180px; padding-left: 12px; background: #555056; margin-right: 6px; gap: 5px; }
.appicon { width: 27px; height: 28px; border-radius: 5px; background: #fff; display: flex; flex-direction: column; align-items: center; }
.appicon b { font-size: 10px; line-height: 12px; color: #ee8a3b; }
.tray { display: flex; align-items: center; gap: 14px; height: 45px; padding-right: 12px; margin-right: 5px; border-right: 1px solid #77757a; font-size: 18px; }
.tray span { margin: 0 -4px; }
```
FILE: grid.js
```javascript
const columns = "ABCDEFGHIJKLMNOPQR".split("");
const widths = { B: 141, C: 103 };
const heights = { 1: 20, 2: 42, 3: 42, 4: 42, 5: 42 };
const inputs = {
  2: ["年需求量<br>（单位：个）", 15000],
  3: ["单次订货成本<br>（单位：元）", 500],
  4: ["单位年储存成本<br>（单位：元）", 30],
  5: ["经济订货批量<br>（单位：个）", 707]
};
const selectedRow = r => r === 2 || r === 4 || r >= 7;
const inTable = (c, r) => (r >= 2 && r <= 5 && c >= 1 && c <= 2) || (r >= 7 && c >= 1 && c <= 12);
const selected = (c, r) => (r === 2 && (c === 1 || c === 2)) || (r === 4 && c === 2) ||
  (r === 7 && c >= 2 && c <= 12) || (r >= 8 && c === 1);

function content(c, r) {
  if (inputs[r] && c === 1) return [inputs[r][0], "label"];
  if (inputs[r] && c === 2) return [inputs[r][1], "r"];
  if (r === 7 && c === 1) return [707, "r"];
  if (r === 7 && c >= 2 && c <= 12) return [10000 + (c - 2) * 1000, "c"];
  if (r >= 8 && c === 1) return [r + 13, "c"];
  return ["", ""];
}

let html = '<colgroup><col style="width:32px">';
columns.forEach(n => { html += `<col style="width:${widths[n] || 72}px">`; });
html += '</colgroup><thead><tr><th><div class="corner"></div></th>';
columns.forEach((n, c) => { html += `<th class="${c >= 1 && c <= 12 ? "on" : ""}">${n}</th>`; });
html += "</tr></thead><tbody>";
for (let r = 1; r <= 19; r++) {
  html += `<tr style="height:${heights[r] || 21}px"><th class="${selectedRow(r) ? "on" : ""}">${r}</th>`;
  columns.forEach((n, c) => {
    const [text, align] = content(c, r);
    const cls = [align];
    if (inTable(c, r) || inTable(c + 1, r)) cls.push("br");
    if (inTable(c, r) || inTable(c, r + 1)) cls.push("bb");
    if (selected(c, r)) cls.push("sel");
    if (c === 1 && r === 4) cls.push("active");
    html += `<td class="${cls.join(" ").trim()}">${text}</td>`;
  });
  html += "</tr>";
}
document.getElementById("grid").innerHTML = html + "</tbody>";
```
